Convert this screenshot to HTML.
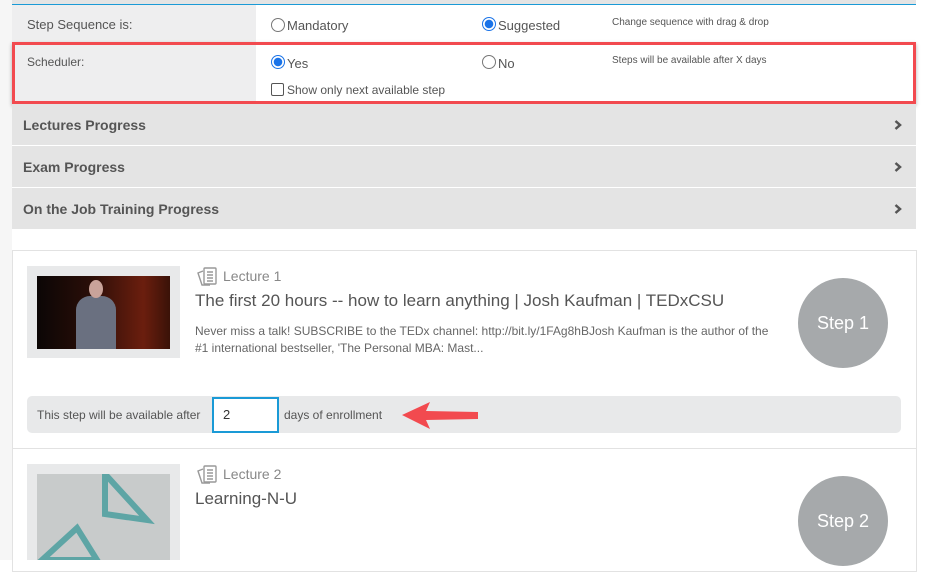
<!DOCTYPE html>
<html><head><style>
body{margin:0;width:927px;height:560px;overflow:hidden;background:#fff;font-family:"Liberation Sans",sans-serif;position:relative;color:#555}
.a{position:absolute}
.rad{position:absolute;width:12px;height:12px;border:1px solid #777;border-radius:50%;background:#fff}
.rad.on{border-color:#1a73e8;background:radial-gradient(circle,#1a73e8 0 4px,#fff 4.5px)}
.acc{position:absolute;left:12px;width:904px;height:41px;background:#e4e4e4;font-weight:bold;font-size:14px;color:#555}
.acc span{position:absolute;left:11px;top:13px}
.acc svg{position:absolute;right:14px;top:16px}
.step{position:absolute;width:90px;height:90px;border-radius:50%;background:#a6a9ab;color:#fff;font-size:18px;text-align:center;line-height:90px}
</style></head><body>
<div class="a" style="left:0;top:0;width:12px;height:560px;background:#f6f6f6"></div>
<div class="a" style="left:12px;top:0;width:904px;height:4px;background:#e4e4e4"></div>
<div class="a" style="left:12px;top:4px;width:904px;height:1px;background:#1a9ad6"></div>
<div class="a" style="left:12px;top:5px;width:244px;height:99px;background:#eeeeef"></div>
<div class="a" style="left:27px;top:17px;font-size:13px">Step Sequence is:</div>
<div class="rad" style="left:271px;top:18px"></div><div class="a" style="left:287px;top:18px;font-size:13px">Mandatory</div>
<div class="rad on" style="left:482px;top:17px"></div><div class="a" style="left:498px;top:18px;font-size:13px">Suggested</div>
<div class="a" style="left:612px;top:17px;font-size:10px">Change sequence with drag &amp; drop</div>
<div class="a" style="left:12px;top:42px;width:898px;height:56px;border:3px solid #f24a4f;box-shadow:0 2px 4px rgba(0,0,0,.3)"></div>
<div class="a" style="left:27px;top:55px;font-size:12px">Scheduler:</div>
<div class="rad on" style="left:271px;top:55px"></div><div class="a" style="left:287px;top:56px;font-size:13px">Yes</div>
<div class="rad" style="left:482px;top:55px"></div><div class="a" style="left:498px;top:56px;font-size:13px">No</div>
<div class="a" style="left:612px;top:55px;font-size:10px">Steps will be available after X days</div>
<div class="a" style="left:271px;top:83px;width:11px;height:11px;border:1px solid #555;border-radius:2px;background:#fff"></div>
<div class="a" style="left:287px;top:83px;font-size:12px">Show only next available step</div>
<div class="acc" style="top:104px"><span>Lectures Progress</span><svg width="8" height="10"><path d="M1.5 1 L6 5 L1.5 9" fill="none" stroke="#555" stroke-width="2.5"/></svg></div>
<div class="acc" style="top:146px"><span>Exam Progress</span><svg width="8" height="10"><path d="M1.5 1 L6 5 L1.5 9" fill="none" stroke="#555" stroke-width="2.5"/></svg></div>
<div class="acc" style="top:188px"><span>On the Job Training Progress</span><svg width="8" height="10"><path d="M1.5 1 L6 5 L1.5 9" fill="none" stroke="#555" stroke-width="2.5"/></svg></div>
<div class="a" style="left:12px;top:250px;width:903px;height:320px;border:1px solid #e2e2e2"></div>
<div class="a" style="left:27px;top:266px;width:153px;height:92px;background:#e8e9ea"></div>
<div class="a" style="left:37px;top:276px;width:133px;height:73px;background:linear-gradient(90deg,#0b0605,#2a0e08 40%,#6b1e0e 80%,#3a1208)"></div>
<div class="a" style="left:76px;top:296px;width:40px;height:53px;background:#6a7080;border-radius:14px 14px 0 0"></div>
<div class="a" style="left:89px;top:280px;width:14px;height:18px;background:#c9a39a;border-radius:50%"></div>
<svg class="a" style="left:196px;top:267px" width="22" height="20"><g fill="none" stroke="#999" stroke-width="1.4"><rect x="8" y="1" width="12" height="16" rx="1"/><path d="M7 4 L2 6 L6 18 L14 18"/><path d="M11 5h6M11 8h6M11 11h6M11 14h6"/></g></svg>
<div class="a" style="left:223px;top:268px;font-size:14px;color:#888">Lecture 1</div>
<div class="a" style="left:195px;top:291px;font-size:17px;color:#555">The first 20 hours -- how to learn anything | Josh Kaufman | TEDxCSU</div>
<div class="a" style="left:195px;top:323px;width:580px;font-size:12px;line-height:17px;color:#666">Never miss a talk! SUBSCRIBE to the TEDx channel: http://bit.ly/1FAg8hBJosh Kaufman is the author of the #1 international bestseller, 'The Personal MBA: Mast...</div>
<div class="step" style="left:798px;top:278px">Step 1</div>
<div class="a" style="left:27px;top:396px;width:874px;height:37px;background:#e8e9ea;border-radius:5px"></div>
<div class="a" style="left:37px;top:408px;font-size:12px">This step will be available after</div>
<div class="a" style="left:212px;top:397px;width:63px;height:32px;border:2px solid #1a9ad6;background:#fff;font-size:13px;line-height:32px;text-indent:9px;color:#333">2</div>
<div class="a" style="left:284px;top:408px;font-size:12px">days of enrollment</div>
<svg class="a" style="left:402px;top:400px" width="80" height="32"><polygon points="0,15 28,2 24,11 76,12 76,19 24,20 28,29" fill="#f24a4f"/></svg>
<div class="a" style="left:12px;top:448px;width:904px;height:1px;background:#e2e2e2"></div>
<div class="a" style="left:27px;top:464px;width:153px;height:96px;background:#e8e9ea"></div>
<div class="a" style="left:37px;top:474px;width:133px;height:86px;background:#c8cbcb"></div>
<svg class="a" style="left:37px;top:474px" width="133" height="86"><polygon points="68,0 110,46 68,40" fill="none" stroke="#5ea5a5" stroke-width="6"/><polygon points="5,86 60,86 40,54" fill="none" stroke="#5ea5a5" stroke-width="6"/></svg>
<svg class="a" style="left:196px;top:465px" width="22" height="20"><g fill="none" stroke="#999" stroke-width="1.4"><rect x="8" y="1" width="12" height="16" rx="1"/><path d="M7 4 L2 6 L6 18 L14 18"/><path d="M11 5h6M11 8h6M11 11h6M11 14h6"/></g></svg>
<div class="a" style="left:223px;top:466px;font-size:14px;color:#888">Lecture 2</div>
<div class="a" style="left:195px;top:489px;font-size:17px;color:#555">Learning-N-U</div>
<div class="step" style="left:798px;top:476px">Step 2</div>
</body></html>
